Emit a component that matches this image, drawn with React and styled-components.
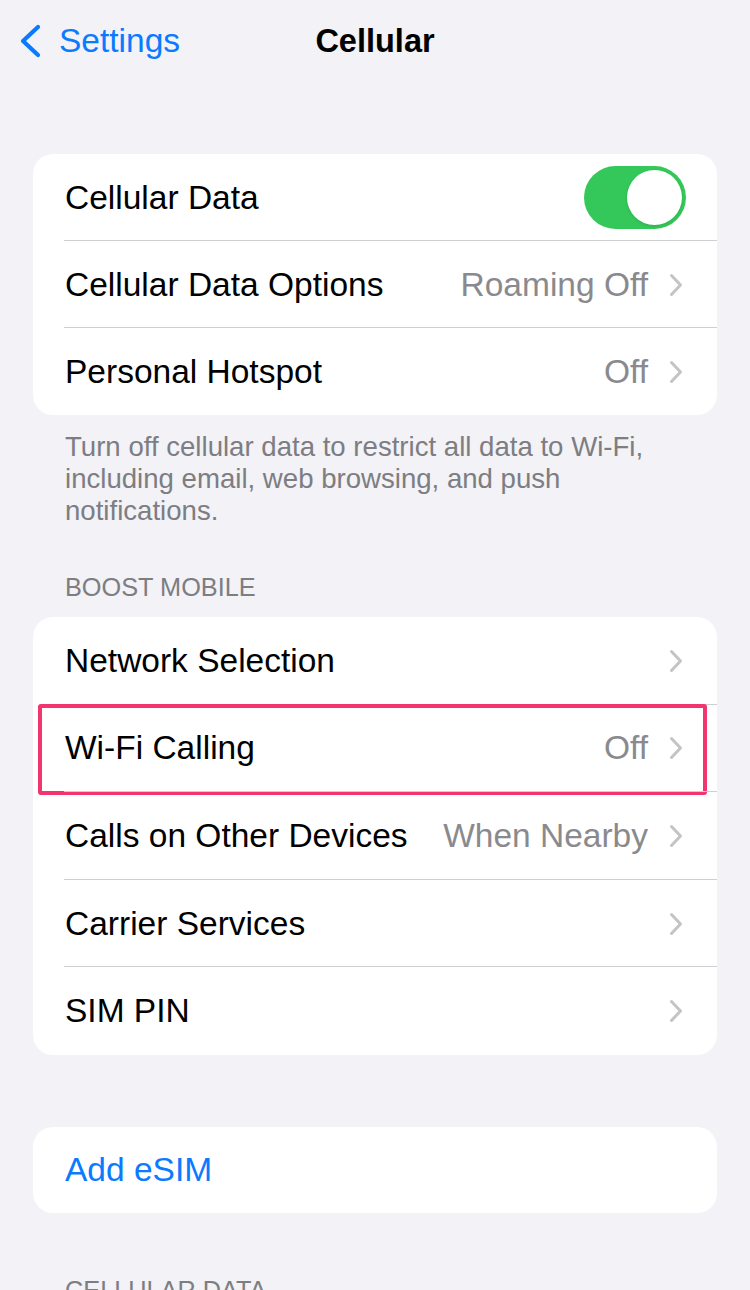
import React from "react";
import styled, { createGlobalStyle } from "styled-components";

const Global = createGlobalStyle`
  html, body { margin: 0; padding: 0; background: #f2f2f7; }
  body { font-family: "Liberation Sans", Arial, sans-serif; -webkit-font-smoothing: antialiased; }
  * { box-sizing: border-box; }
`;

const Page = styled.div`
  width: 750px;
  height: 1290px;
  overflow: hidden;
  background: #f2f2f7;
`;

const NavBar = styled.header`
  display: grid;
  grid-template-columns: 1fr auto 1fr;
  align-items: center;
  height: 82px;
  padding: 0 18px;
`;

const BackButton = styled.div`
  display: flex;
  align-items: center;
  gap: 17px;
  color: #0a7aff;
  font-size: 33.5px;
  line-height: 1;
`;

const Title = styled.h1`
  margin: 0;
  font-size: 32.5px;
  font-weight: 700;
  color: #000;
  line-height: 1;
`;

const Content = styled.main`
  padding: 72px 33px 0;
  display: flex;
  flex-direction: column;
`;

const Card = styled.section`
  background: #fff;
  border-radius: 20px;
  overflow: visible;
  margin-top: ${(p) => p.$mt || 0}px;
`;

const Row = styled.div`
  position: relative;
  display: flex;
  align-items: center;
  height: ${(p) => p.$h || 87}px;
  padding: 0 31px 0 32px;
  &:not(:last-child)::after {
    content: "";
    position: absolute;
    left: 31px;
    right: 0;
    bottom: 0;
    height: 1px;
    background: #cfcfd3;
  }
`;

const Label = styled.span`
  flex: 1;
  font-size: 33.5px;
  color: ${(p) => (p.$link ? "#0a7aff" : "#000")};
  white-space: nowrap;
`;

const Value = styled.span`
  font-size: 33.5px;
  color: #8a8a8e;
  margin-right: 20px;
  white-space: nowrap;
`;

const ChevronWrap = styled.span`
  display: flex;
  width: 16px;
  justify-content: center;
  margin-right: 2px;
`;

const Toggle = styled.div`
  width: 102px;
  height: 63px;
  border-radius: 32px;
  background: #34c759;
  padding: 4px;
  display: flex;
  justify-content: flex-end;
`;

const Knob = styled.div`
  width: 55px;
  height: 55px;
  border-radius: 50%;
  background: #fff;
  box-shadow: 0 1px 3px rgba(0, 0, 0, 0.12);
`;

const Footer = styled.p`
  margin: 16px 0 0;
  padding: 0 32px;
  font-size: 27.6px;
  line-height: 32px;
  color: #7d7d82;
`;

const SectionHeader = styled.h2`
  margin: ${(p) => p.$mt}px 0 15px;
  padding: 0 32px;
  font-size: 25.3px;
  font-weight: 400;
  line-height: 30px;
  color: #7d7d82;
  text-transform: uppercase;
`;

const Highlight = styled.div`
  position: absolute;
  left: 5px;
  right: 10px;
  top: -1px;
  bottom: -3px;
  border: 4.5px solid #f0356f;
  border-radius: 3px;
  pointer-events: none;
`;

const Chevron = () => (
  <svg width="14" height="24" viewBox="0 0 14 24" fill="none">
    <path d="M2.5 2.5 L11.5 12 L2.5 21.5" stroke="#c4c4c7" strokeWidth="3" strokeLinecap="round" strokeLinejoin="round" />
  </svg>
);

const BackChevron = () => (
  <svg width="24" height="34" viewBox="0 0 24 34" fill="none">
    <path d="M20 3 L5 17 L20 31" stroke="#0a7aff" strokeWidth="4.2" strokeLinecap="round" strokeLinejoin="round" />
  </svg>
);

const NavRow = ({ label, value, highlight, h }) => (
  <Row $h={h}>
    <Label>{label}</Label>
    {value && <Value>{value}</Value>}
    <ChevronWrap>
      <Chevron />
    </ChevronWrap>
    {highlight && <Highlight />}
  </Row>
);

export default function App() {
  return (
    <Page>
      <Global />
      <NavBar>
        <BackButton>
          <BackChevron />
          <span>Settings</span>
        </BackButton>
        <Title>Cellular</Title>
        <div />
      </NavBar>
      <Content>
        <Card>
          <Row>
            <Label>Cellular Data</Label>
            <Toggle>
              <Knob />
            </Toggle>
          </Row>
          <NavRow label="Cellular Data Options" value="Roaming Off" />
          <NavRow label="Personal Hotspot" value="Off" />
        </Card>
        <Footer>
          Turn off cellular data to restrict all data to Wi-Fi, including email, web browsing, and push
          notifications.
        </Footer>
        <SectionHeader $mt={45}>Boost Mobile</SectionHeader>
        <Card>
          <NavRow label="Network Selection" h={87.6} />
          <NavRow label="Wi-Fi Calling" value="Off" highlight h={87.6} />
          <NavRow label="Calls on Other Devices" value="When Nearby" h={87.6} />
          <NavRow label="Carrier Services" h={87.6} />
          <NavRow label="SIM PIN" h={87.6} />
        </Card>
        <Card $mt={72}>
          <Row $h={86}>
            <Label $link>Add eSIM</Label>
          </Row>
        </Card>
        <SectionHeader $mt={62}>Cellular Data</SectionHeader>
      </Content>
    </Page>
  );
}
